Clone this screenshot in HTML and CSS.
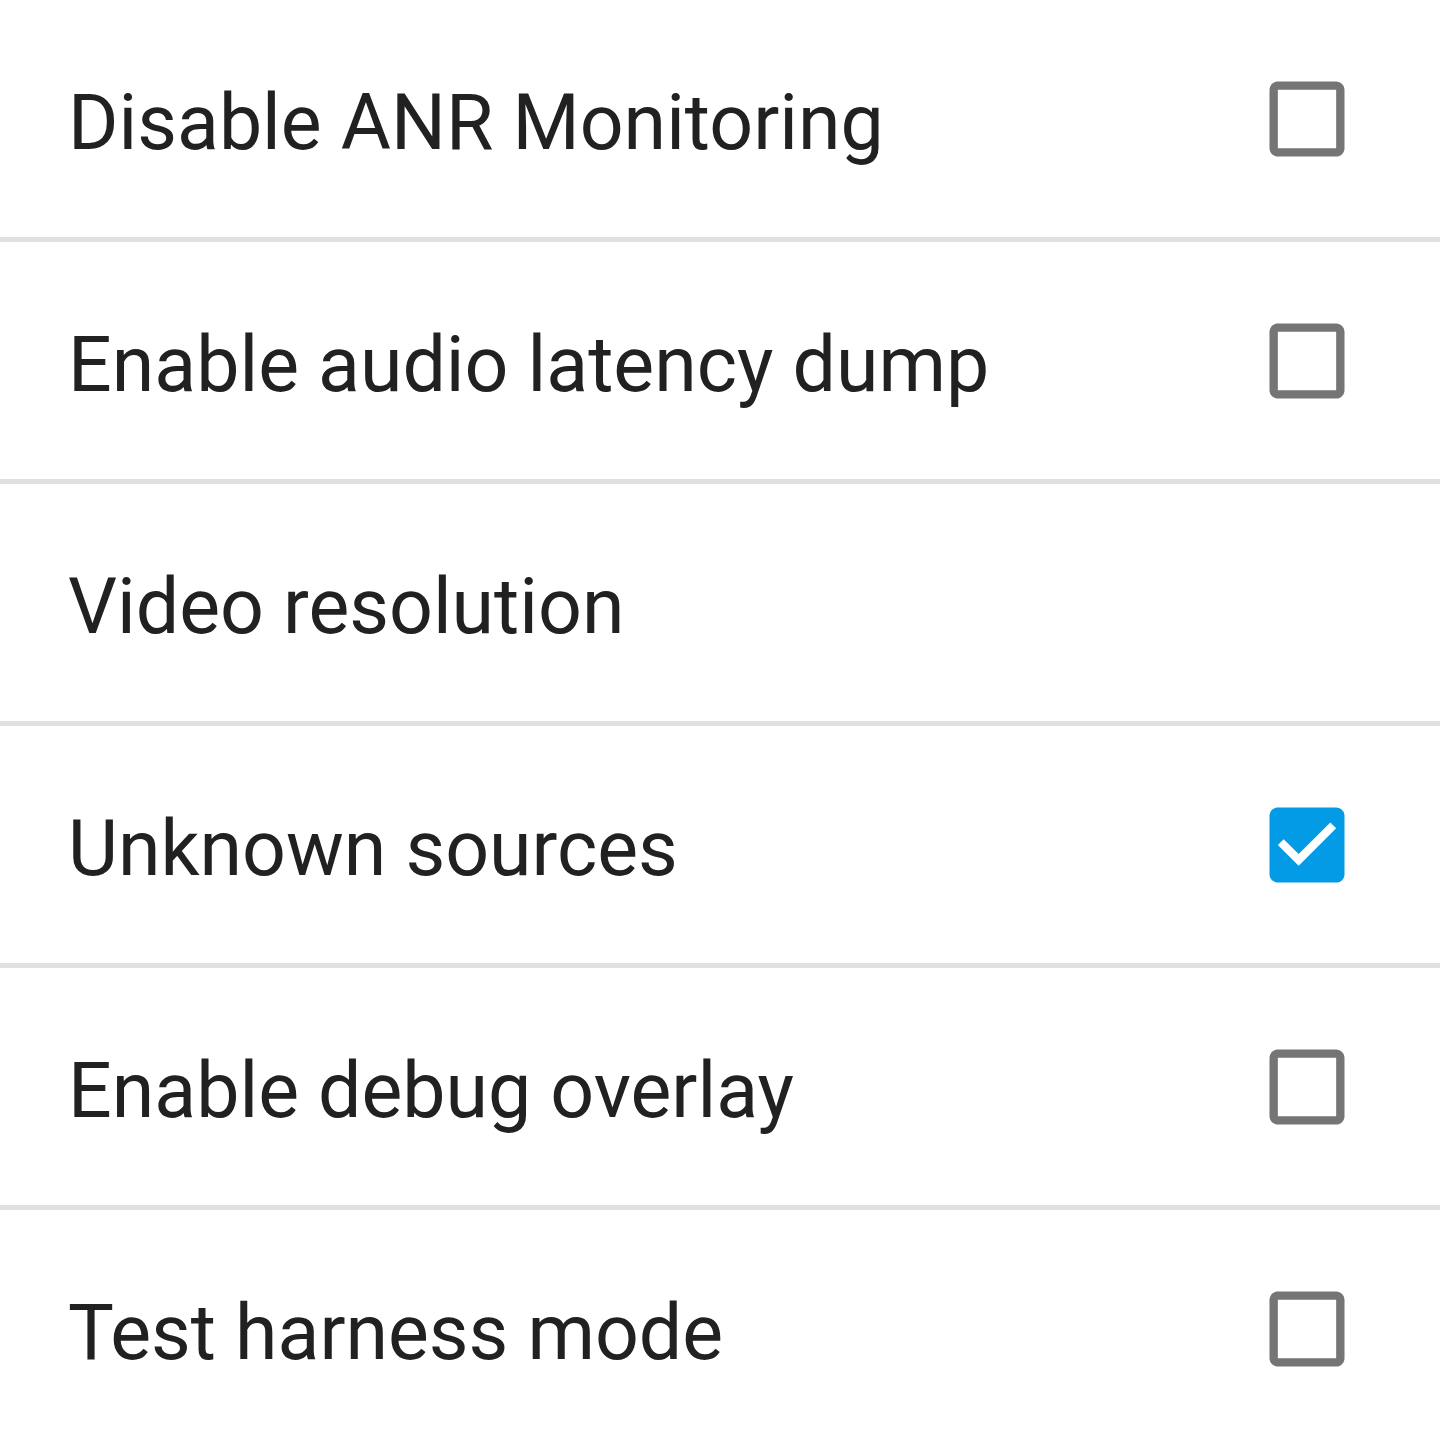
FILE: index.html
```html
<!DOCTYPE html>
<html>
<head>
<meta charset="utf-8">
<link rel="stylesheet" href="styles.css">
</head>
<body>
<div class="list">
  <div class="row">
    <span class="label">Disable ANR Monitoring</span>
    <svg class="cb" viewBox="0 0 24 24"><path fill="#757575" d="M19 5v14H5V5h14m0-2H5c-1.11 0-2 .9-2 2v14c0 1.1.89 2 2 2h14c1.1 0 2-.9 2-2V5c0-1.1-.9-2-2-2z"/></svg>
  </div>
  <div class="row">
    <span class="label">Enable audio latency dump</span>
    <svg class="cb" viewBox="0 0 24 24"><path fill="#757575" d="M19 5v14H5V5h14m0-2H5c-1.11 0-2 .9-2 2v14c0 1.1.89 2 2 2h14c1.1 0 2-.9 2-2V5c0-1.1-.9-2-2-2z"/></svg>
  </div>
  <div class="row">
    <span class="label">Video resolution</span>
  </div>
  <div class="row">
    <span class="label">Unknown sources</span>
    <svg class="cb" viewBox="0 0 24 24"><path fill="#039be5" d="M19 3H5c-1.11 0-2 .9-2 2v14c0 1.1.89 2 2 2h14c1.11 0 2-.9 2-2V5c0-1.1-.89-2-2-2z"/><path fill="#ffffff" d="M10 17l-5-5 1.41-1.41L10 14.17l7.59-7.59L19 8l-9 9z"/></svg>
  </div>
  <div class="row">
    <span class="label">Enable debug overlay</span>
    <svg class="cb" viewBox="0 0 24 24"><path fill="#757575" d="M19 5v14H5V5h14m0-2H5c-1.11 0-2 .9-2 2v14c0 1.1.89 2 2 2h14c1.1 0 2-.9 2-2V5c0-1.1-.9-2-2-2z"/></svg>
  </div>
  <div class="row last">
    <span class="label">Test harness mode</span>
    <svg class="cb" viewBox="0 0 24 24"><path fill="#757575" d="M19 5v14H5V5h14m0-2H5c-1.11 0-2 .9-2 2v14c0 1.1.89 2 2 2h14c1.1 0 2-.9 2-2V5c0-1.1-.9-2-2-2z"/></svg>
  </div>
</div>
</body>
</html>
```
FILE: styles.css
```css
html, body {
  margin: 0;
  padding: 0;
  background: #ffffff;
}
body {
  font-family: Roboto, "Noto Sans", sans-serif;
  color: #212121;
}
.list {
  display: flex;
  flex-direction: column;
}
.row {
  height: 237px;
  display: flex;
  align-items: center;
  justify-content: space-between;
  padding: 0 83.5px 0 68px;
  border-bottom: 5px solid #e0e0e0;
}
.row.last {
  border-bottom: none;
}
.label {
  font-size: 77px;
  line-height: 1;
  padding-top: 9px;
}
.cb {
  width: 100px;
  height: 100px;
  flex: none;
}
```
